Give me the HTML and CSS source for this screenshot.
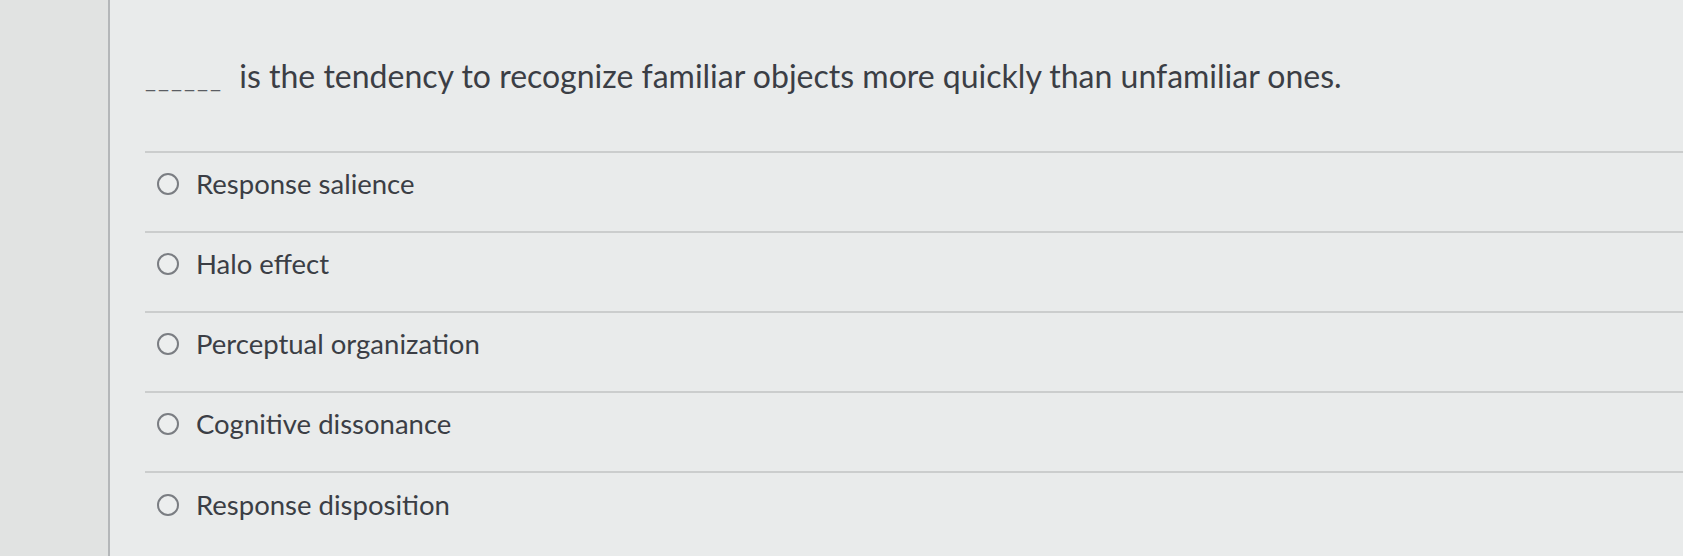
FILE: index.html
```html
<!DOCTYPE html>
<html>
<head>
<meta charset="utf-8">
<link rel="stylesheet" href="styles.css">
</head>
<body>
<div class="page">
  <aside class="sidebar"></aside>
  <main class="content">
    <p class="question"><span class="blank">______</span> is the tendency to recognize familiar objects more quickly than unfamiliar ones.</p>
    <ul class="options">
      <li class="option"><span class="radio"></span><span class="label">Response salience</span></li>
      <li class="option"><span class="radio"></span><span class="label">Halo effect</span></li>
      <li class="option"><span class="radio"></span><span class="label">Perceptual organization</span></li>
      <li class="option"><span class="radio"></span><span class="label">Cognitive dissonance</span></li>
      <li class="option"><span class="radio"></span><span class="label">Response disposition</span></li>
    </ul>
  </main>
</div>
</body>
</html>
```
FILE: styles.css
```css
html, body {
  margin: 0;
  padding: 0;
  height: 100%;
}
body {
  background: #e9ebeb;
  font-family: Lato, "Open Sans", sans-serif;
  color: #3b3e45;
  overflow: hidden;
}
.page {
  display: flex;
  height: 556px;
}
.sidebar {
  width: 108px;
  flex: none;
  background: #e1e3e2;
  border-right: 2px solid #b4b7b9;
}
.content {
  flex: 1;
  padding-left: 35px;
}
.question {
  margin: 0;
  padding-top: 56px;
  height: 153px;
  box-sizing: border-box;
  font-size: 32px;
  line-height: 40px;
  border-bottom: 2px solid #cbcdcd;
  white-space: nowrap;
}
.blank {
  font-size: 24px;
  letter-spacing: 2px;
  margin-right: 8px;
  color: #5a5d63;
}
.options {
  list-style: none;
  margin: 0;
  padding: 0;
}
.option {
  display: flex;
  align-items: center;
  height: 80px;
  box-sizing: border-box;
  border-bottom: 2px solid #cbcdcd;
  padding-left: 12px;
  padding-bottom: 16px;
}
.option:last-child {
  border-bottom: none;
}
.radio {
  width: 18px;
  height: 18px;
  border: 2px solid #7a7d82;
  border-radius: 50%;
  flex: none;
  margin-right: 17px;
  background: #eceeee;
}
.label {
  font-size: 27.5px;
  line-height: 32px;
}
```
